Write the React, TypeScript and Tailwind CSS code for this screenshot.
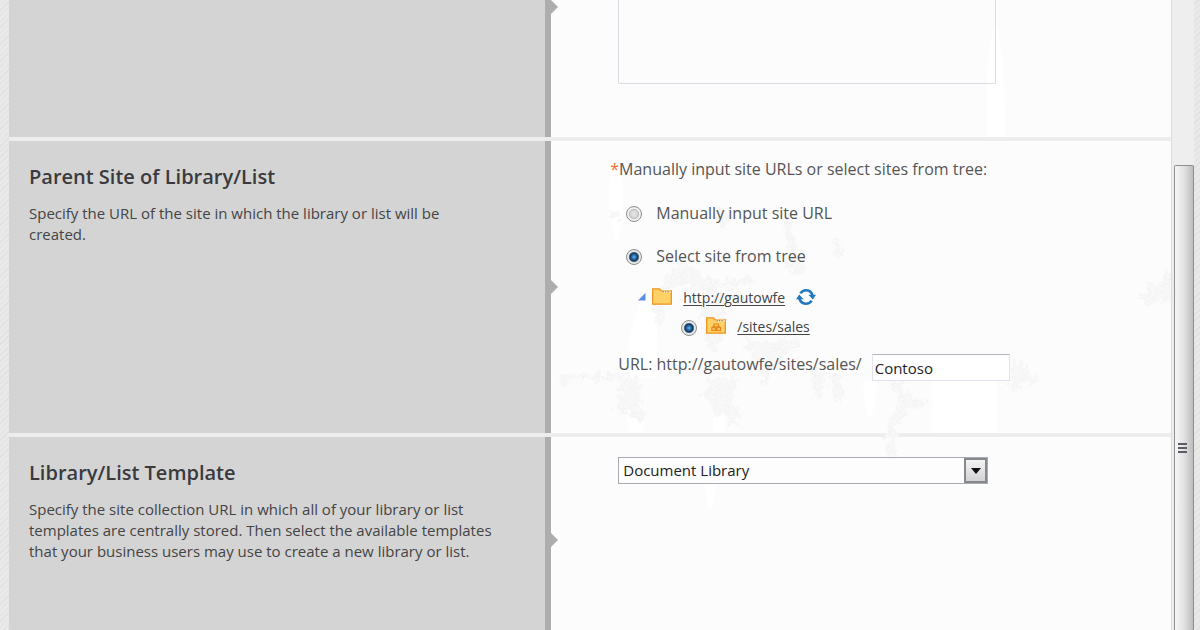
import { useState } from "react";
import type { InputHTMLAttributes, ReactNode } from "react";

interface SectionProps {
  title?: string;
  description?: string;
  arrow: string;
  className?: string;
  children: ReactNode;
}

function Section({ title, description, arrow, className = "", children }: SectionProps) {
  return (
    <section className={`grid grid-cols-[7fr_8fr] ${className}`}>
      <div className="relative border-r-[6px] border-[#adadad] bg-[#d4d4d4] pt-[22px] pr-10 pl-5">
        {title && (
          <h2 className="text-xl leading-7 font-semibold text-[#3a3a3e]">{title}</h2>
        )}
        {description && (
          <p className="mt-3 max-w-[468px] text-[15px] leading-[21px] text-[#444]">
            {description}
          </p>
        )}
        <svg
          viewBox="0 0 7 14"
          className={`absolute -right-[13px] h-[14px] w-[7px] ${arrow}`}
          fill="#adadad"
        >
          <path d="M0 0L7 7L0 14Z" />
        </svg>
      </div>
      <div className="relative pl-[67px]">{children}</div>
    </section>
  );
}

function Radio(props: InputHTMLAttributes<HTMLInputElement>) {
  return (
    <input
      type="radio"
      className="mt-[2px] size-4 shrink-0 appearance-none rounded-full border border-[#8b8e8e] bg-[radial-gradient(circle_at_50%_50%,#e6e6e6_0,#d8d8d8_34%,#b9bbbd_46%,#f1f1f1_56%)] checked:bg-[radial-gradient(circle_at_50%_50%,#6db6e6_0,#2b75b8_20%,#12345e_40%,#5a6b7b_47%,#e4eaea_56%)]"
      {...props}
    />
  );
}

function FolderIcon({ site = false }: { site?: boolean }) {
  return (
    <svg viewBox="0 0 20 17" className="mb-1 h-[17px] w-5 shrink-0">
      <path d="M.7 16.2V.8H7.5L9 2.6H19.3V16.2Z" fill="#ffd066" stroke="#ee941f" strokeWidth="1.3" />
      <path d="M9.5 2.4H18.6V4.6H11Z" fill="#fff3d0" />
      <path d="M10.5 3.6H18" stroke="#a97c3c" strokeWidth="1.4" strokeDasharray="1.4 1" />
      {site && (
        <g fill="none" stroke="#e58a1c" strokeWidth="1.2">
          <path d="M8 7H12.4V9.8H8Z" />
          <path d="M5.8 10.6H9.6V13.4H5.8ZM10.8 10.6H14.6V13.4H10.8Z" />
          <path d="M6.4 10.6L8 8.6M14 10.6L12.4 8.6" />
        </g>
      )}
    </svg>
  );
}

function RefreshIcon() {
  return (
    <svg viewBox="0 0 20 18" className="h-[18px] w-5">
      <g fill="none" stroke="#2479be" strokeWidth="2.6">
        <path d="M4.4 5.4C7 1.2 14.2.6 16.6 7.2" />
        <path d="M15.6 12.6C13 16.8 5.8 17.4 3.4 10.8" />
      </g>
      <path d="M12.4 6.8H20L16.8 11.4Z" fill="#2479be" />
      <path d="M7.6 11.2H0L3.2 6.6Z" fill="#2479be" />
    </svg>
  );
}

// Faint artwork behind the form
function Watermark() {
  return (
    <svg
      viewBox="0 0 620 630"
      className="pointer-events-none absolute top-0 right-0 h-[630px] w-[620px]"
      aria-hidden="true"
    >
      <defs>
        <pattern id="speckle" width="6" height="6" patternUnits="userSpaceOnUse">
          <rect width="6" height="6" fill="#f8f8f8" />
          <path d="M0 1H2M3 3H5M1 5H2M5 0H6" stroke="#f1f1f1" />
        </pattern>
        <filter id="ragged">
          <feTurbulence type="fractalNoise" baseFrequency="0.16" numOctaves="2" seed="4" />
          <feDisplacementMap in="SourceGraphic" scale="18" xChannelSelector="R" yChannelSelector="G" />
        </filter>
      </defs>
      <g fill="#fff">
        <path d="M445 20C436 50 434 90 436 137H454C454 90 452 50 445 20Z" />
        <path d="M60 160C56 200 58 225 66 242C72 225 74 200 70 160Z" />
        <path d="M93 295C80 320 75 350 76 378H106V300Z" />
        <path d="M381 380H446V433H381Z" />
        <path d="M312 381C313 400 315 412 319 418C324 410 325 395 325 381Z" />
        <path d="M75 412H96L92 432H78ZM162 414H174V432H162Z" />
        <path d="M154 484C155 498 157 506 160 510C163 504 164 494 164 484Z" />
      </g>
      <g fill="url(#speckle)" filter="url(#ragged)">
        <path d="M110 288L116 272L128 264L142 266L154 276L168 284L172 296L160 300L150 290L136 284L122 290L114 300Z" />
        <path d="M104 300L114 298L116 312L108 326L102 314Z" />
        <path d="M152 296L170 292L176 310L172 330L166 350L158 352L156 334L150 318Z" />
        <path d="M162 280H204L202 284L166 286ZM174 290H188L190 298L178 296Z" />
        <path d="M194 338L212 342L246 336L250 344L236 352L228 364L220 372L212 386L206 372L204 358L196 350Z" />
        <path d="M232 216L240 214L242 230L246 248L254 262L252 274L242 276L234 262L240 256L234 236Z" />
        <path d="M112 216L124 212L136 218L128 224ZM158 216L170 208L184 216L178 226L166 222ZM60 210L68 212L70 218L60 220Z" />
        <path d="M8 374H74V379H26L16 382L12 390L8 384Z" />
        <path d="M66 378L86 376L90 390L88 402L96 412L92 424L84 420L76 412L64 410L70 396Z" />
        <path d="M156 378H186L188 388L180 394L188 410L186 420L192 430L184 428L176 414L164 416L162 404L150 396L158 388Z" />
        <path d="M258 370L274 368L276 384L268 394L264 404L262 386ZM276 376L288 374L290 390L294 394L286 402L282 388Z" />
        <path d="M334 380H348L358 396L376 400L372 406L360 408L352 418L346 430L346 456H334L336 434L334 426L344 412L350 400Z" />
        <path d="M458 360L470 362L480 372L476 378L490 378V382L474 384L464 392L454 382L462 376Z" />
        <path d="M582 296L594 294L596 286L610 284L614 272H620V302L596 304ZM282 240L290 242L294 248L286 258Z" />
      </g>
    </svg>
  );
}

const HATCH =
  "bg-[repeating-linear-gradient(135deg,#e9e9e9_0,#e9e9e9_3px,#e0e0e0_3px,#e0e0e0_4px)]";

export default function App() {
  const [mode, setMode] = useState("tree");
  const [name, setName] = useState("Contoso");

  return (
    <div
      className={`flex h-screen overflow-hidden pl-[9px] font-['Open_Sans','Noto_Sans',sans-serif] ${HATCH}`}
    >
      <main className="relative flex flex-1 flex-col bg-[#fcfcfc]">
        <Watermark />

        <Section arrow="top-0" className="border-b-4 border-[#ededed]">
          <textarea
            aria-label="Description"
            className="mb-[53px] block h-[84px] w-[378px] resize-none rounded-b-xs border border-t-0 border-[#d9dce3] bg-transparent outline-none"
          />
        </Section>

        <Section
          title="Parent Site of Library/List"
          description="Specify the URL of the site in which the library or list will be created."
          arrow="top-1/2 -translate-y-1/2"
          className="border-b-4 border-[#ededed]"
        >
          <fieldset aria-label="Parent site" className="pt-4 pb-[52px] text-base text-[#555]">
            <p className="-ml-2 leading-6">
              <span className="text-[#f26a2c]">*</span>Manually input site URLs or select sites from
              tree:
            </p>
            <label className="mt-5 ml-2 flex items-center gap-[14px] leading-6">
              <Radio name="mode" checked={mode === "manual"} onChange={() => setMode("manual")} />
              Manually input site URL
            </label>
            <label className="mt-[19px] ml-2 flex items-center gap-[14px] leading-6">
              <Radio name="mode" checked={mode === "tree"} onChange={() => setMode("tree")} />
              Select site from tree
            </label>

            <div className="mt-[18px] ml-5 flex items-center text-sm leading-6">
              <button type="button" aria-label="Collapse" className="mr-[6px] mb-[2px]">
                <svg viewBox="0 0 8 8" className="size-2">
                  <path d="M7.5 0V7.5H0Z" fill="#5b8be6" />
                </svg>
              </button>
              <FolderIcon />
              <a href="#root" className="ml-[11px] text-[#444] underline underline-offset-2">
                http://gautowfe
              </a>
              <button type="button" aria-label="Refresh" className="mb-[2px] ml-[11px]">
                <RefreshIcon />
              </button>
            </div>
            <div className="mt-[5px] ml-[63px] flex items-center text-sm leading-6">
              <Radio name="site" aria-label="/sites/sales" defaultChecked />
              <span className="ml-[9px]">
                <FolderIcon site />
              </span>
              <a href="#sales" className="ml-[11px] text-[#444] underline underline-offset-2">
                /sites/sales
              </a>
            </div>

            <div className="mt-[15px] flex items-start">
              <label htmlFor="site-name" className="leading-5">
                URL: http://gautowfe/sites/sales/
              </label>
              <input
                id="site-name"
                type="text"
                value={name}
                onChange={(e) => setName(e.target.value)}
                className="ml-[10px] h-[27px] w-[138px] border border-[#e0e4ec] border-t-[#b4b6bf] bg-white px-[2px] text-[15px] text-[#222] outline-none"
              />
            </div>
          </fieldset>
        </Section>

        <Section
          title="Library/List Template"
          description="Specify the site collection URL in which all of your library or list templates are centrally stored. Then select the available templates that your business users may use to create a new library or list."
          arrow="top-1/2 -translate-y-1/2"
          className="min-h-[206px] shrink-0 grow"
        >
          <div className="relative mt-5 h-[27px] w-[370px]">
            <select
              aria-label="Library/List Template"
              className="h-full w-full appearance-none border border-[#a9abb3] bg-[#fdfdfd] pl-1 text-[15px] text-[#222] outline-none"
            >
              <option>Document Library</option>
            </select>
            <span className="pointer-events-none absolute top-px right-px flex h-[25px] w-[23px] items-center justify-center border-2 border-[#85888e] bg-linear-to-b from-[#f4f4f4] to-[#d2d2d2]">
              <svg viewBox="0 0 10 6" className="h-[6px] w-[10px]">
                <path d="M0 0H10L5 6Z" fill="#111" />
              </svg>
            </span>
          </div>
        </Section>
      </main>

      {/* Scrollbar */}
      <div className="mr-[6px] flex w-[23px] flex-col border-l border-[#dcdcdc] bg-[#eeeeee] pt-[165px] pl-[2px]">
        <div className="flex grow flex-col items-center rounded-t-xs border border-b-0 border-[#8f8f8f] bg-linear-to-r from-[#f6f6f6] via-[#e2e2e2] to-[#bcbcbc] pt-[277px]">
          <div className="mr-1 flex flex-col gap-[2px]">
            <div className="h-[2px] w-[9px] bg-[#5c5c66]" />
            <div className="h-[2px] w-[9px] bg-[#5c5c66]" />
            <div className="h-[2px] w-[9px] bg-[#5c5c66]" />
          </div>
        </div>
      </div>
    </div>
  );
}
